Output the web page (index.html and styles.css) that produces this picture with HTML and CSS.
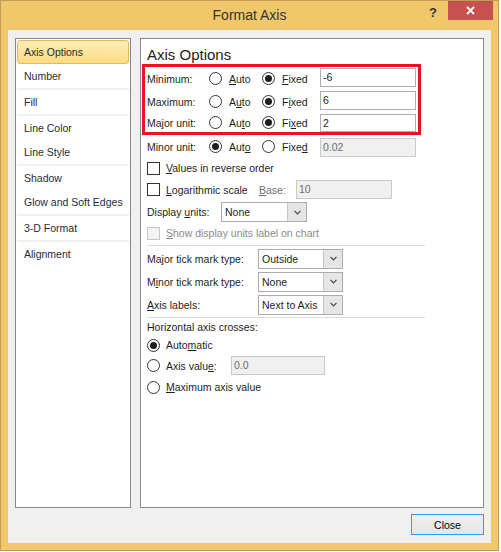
FILE: index.html
```html
<!DOCTYPE html>
<html lang="en">
<head>
    <meta charset="UTF-8">
    <title>Format Axis</title>
    <link rel="stylesheet" href="styles.css">
</head>
<body>
    <div class="window">
        <div class="titlebar">
            <span></span>
            <span class="title">Format Axis</span>
            <span class="controls">
                <span class="help">?</span>
                <span class="close-x">
                    <svg width="9" height="9" viewBox="0 0 9 9"><path d="M1 1L8 8M8 1L1 8" stroke="#fff" stroke-width="1.8"/></svg>
                </span>
            </span>
        </div>

        <div class="client">
            <ul class="nav">
                <li class="active">Axis Options</li>
                <li class="group-end">Number</li>
                <li class="group-end">Fill</li>
                <li>Line Color</li>
                <li class="group-end">Line Style</li>
                <li>Shadow</li>
                <li class="group-end">Glow and Soft Edges</li>
                <li class="group-end">3-D Format</li>
                <li>Alignment</li>
            </ul>

            <div class="panel">
                <h2>Axis Options</h2>

                <!-- highlighted block -->
                <div class="highlight">
                    <div class="unit-row">
                        <span>Minimum:</span>
                        <span class="option"><span class="radio"></span><span><u>A</u>uto</span></span>
                        <span class="option"><span class="radio on"></span><span><u>F</u>ixed</span></span>
                        <span class="textbox">-6</span>
                    </div>
                    <div class="unit-row">
                        <span>Maximum:</span>
                        <span class="option"><span class="radio"></span><span>A<u>u</u>to</span></span>
                        <span class="option"><span class="radio on"></span><span>F<u>i</u>xed</span></span>
                        <span class="textbox">6</span>
                    </div>
                    <div class="unit-row">
                        <span>Major unit:</span>
                        <span class="option"><span class="radio"></span><span>Au<u>t</u>o</span></span>
                        <span class="option"><span class="radio on"></span><span>Fi<u>x</u>ed</span></span>
                        <span class="textbox">2</span>
                    </div>
                </div>

                <div class="unit-row minor">
                    <span>Minor unit:</span>
                    <span class="option"><span class="radio on"></span><span>Aut<u>o</u></span></span>
                    <span class="option"><span class="radio"></span><span>Fixe<u>d</u></span></span>
                    <span class="textbox disabled">0.02</span>
                </div>

                <div class="check-row row-20">
                    <span class="checkbox"></span>
                    <span><u>V</u>alues in reverse order</span>
                </div>
                <div class="check-row row-23">
                    <span class="checkbox"></span>
                    <span class="log-label"><u>L</u>ogarithmic scale</span>
                    <span class="base-label"><u>B</u>ase:</span>
                    <span class="textbox disabled base-box">10</span>
                </div>
                <div class="check-row row-22">
                    <span class="units-label">Display <u>u</u>nits:</span>
                    <span class="select units-select">
                        <span class="sel-text">None</span>
                        <span class="sel-btn"><svg width="7" height="5" viewBox="0 0 7 5"><path d="M0.5 0.8L3.5 3.8L6.5 0.8" fill="none" stroke="#444" stroke-width="1.2"/></svg></span>
                    </span>
                </div>
                <div class="check-row row-20 muted">
                    <span class="checkbox off"></span>
                    <span><u>S</u>how display units label on chart</span>
                </div>

                <div class="rule first"></div>

                <div class="check-row row-23">
                    <span class="tick-label">Ma<u>j</u>or tick mark type:</span>
                    <span class="select tick-select">
                        <span class="sel-text">Outside</span>
                        <span class="sel-btn"><svg width="7" height="5" viewBox="0 0 7 5"><path d="M0.5 0.8L3.5 3.8L6.5 0.8" fill="none" stroke="#444" stroke-width="1.2"/></svg></span>
                    </span>
                </div>
                <div class="check-row row-23">
                    <span class="tick-label">M<u>i</u>nor tick mark type:</span>
                    <span class="select tick-select">
                        <span class="sel-text">None</span>
                        <span class="sel-btn"><svg width="7" height="5" viewBox="0 0 7 5"><path d="M0.5 0.8L3.5 3.8L6.5 0.8" fill="none" stroke="#444" stroke-width="1.2"/></svg></span>
                    </span>
                </div>
                <div class="check-row row-23">
                    <span class="tick-label"><u>A</u>xis labels:</span>
                    <span class="select tick-select">
                        <span class="sel-text">Next to Axis</span>
                        <span class="sel-btn"><svg width="7" height="5" viewBox="0 0 7 5"><path d="M0.5 0.8L3.5 3.8L6.5 0.8" fill="none" stroke="#444" stroke-width="1.2"/></svg></span>
                    </span>
                </div>

                <div class="rule"></div>

                <div class="caption">Horizontal axis crosses:</div>
                <div class="check-row row-18">
                    <span class="radio on"></span>
                    <span>Auto<u>m</u>atic</span>
                </div>
                <div class="check-row row-23">
                    <span class="radio"></span>
                    <span class="axis-label">Axis valu<u>e</u>:</span>
                    <span class="textbox disabled axis-box">0.0</span>
                </div>
                <div class="check-row row-20">
                    <span class="radio"></span>
                    <span><u>M</u>aximum axis value</span>
                </div>
            </div>

            <div class="footer">
                <button class="btn">Close</button>
            </div>
        </div>
    </div>
</body>
</html>
```

FILE: styles.css
```css
body {
    margin: 0;
    background-color: #fff;
    font-family: 'Liberation Sans', Arial, sans-serif;
    font-size: 10.5px;
    color: #1e1e1e;
}
.window {
    box-sizing: border-box;
    width: 499px;
    height: 551px;
    border: 1px solid #bf9d58;
    background-color: #f0c86b;
    padding: 0 7px 7px;
    display: flex;
    flex-direction: column;
}
.titlebar {
    margin: 0 -7px;
    height: 29px;
    display: grid;
    grid-template-columns: 1fr auto 1fr;
}
.title {
    font-size: 14px;
    line-height: 29px;
    color: #333;
}
.controls {
    justify-self: end;
    display: flex;
    align-items: flex-start;
}
.help {
    font-size: 13px;
    font-weight: bold;
    color: #333;
    margin: 5px 11px 0 0;
    line-height: 13px;
}
.close-x {
    width: 45px;
    height: 19px;
    margin-right: 5px;
    background-color: #c75050;
    display: flex;
    align-items: center;
    justify-content: center;
}
.client {
    flex: 1;
    background-color: #f0f0f0;
    padding: 8px 6px 0 7px;
    display: grid;
    grid-template-columns: 116px 344px;
    grid-template-rows: 470px 21px;
    column-gap: 9px;
    row-gap: 6px;
}
.nav {
    list-style: none;
    margin: 0;
    padding: 1px;
    border: 1px solid #828790;
    background-color: #fff;
    color: #1f2b3a;
}
.nav li {
    box-sizing: border-box;
    height: 24px;
    line-height: 24px;
    padding-left: 7px;
}
.nav li.group-end {
    height: 26px;
    border-bottom: 2px solid #f0f0f0;
}
.nav li.active {
    line-height: 22px;
    padding-left: 6px;
    border: 1px solid #e2b95a;
    border-radius: 3px;
    background: linear-gradient(#fdeeb4, #fcdb83);
}
.panel {
    border: 1px solid #828790;
    background-color: #fff;
    padding: 6px 0 0 6px;
}
.panel h2 {
    margin: 0;
    font-size: 15px;
    font-weight: normal;
    line-height: 19px;
    color: #1e1e1e;
}
.highlight {
    width: fit-content;
    margin-left: -5px;
    padding: 0 2px;
    border: 3px solid #e8141f;
}
.unit-row {
    display: grid;
    grid-template-columns: 62px 53px 58px 96px;
    align-items: center;
    height: 23px;
}
.highlight .unit-row:last-child {
    height: 19px;
}
.highlight .unit-row:last-child .textbox {
    height: 18px;
}
.unit-row .textbox {
    align-self: start;
    margin-top: 1px;
}
.unit-row.minor .textbox {
    margin-top: 3px;
}
.option {
    display: flex;
    align-items: center;
    gap: 7px;
}
.radio {
    box-sizing: border-box;
    width: 13px;
    height: 13px;
    border: 1px solid #333;
    border-radius: 50%;
    background-color: #fff;
    display: inline-grid;
    place-items: center;
    flex: none;
}
.radio.on::after {
    content: '';
    width: 7px;
    height: 7px;
    border-radius: 50%;
    background-color: #1e1e1e;
}
.checkbox {
    box-sizing: border-box;
    width: 13px;
    height: 13px;
    border: 1px solid #333;
    background-color: #fff;
    flex: none;
}
.checkbox.off {
    border-color: #c6c6c6;
    background-color: #f3f3f3;
}
.textbox {
    box-sizing: border-box;
    display: block;
    height: 19px;
    border: 1px solid #abadb3;
    background-color: #fff;
    padding: 0 2px;
    line-height: 17px;
}
.textbox.disabled {
    background-color: #f0f0f0;
    border-color: #c9c9c9;
    color: #6d6d6d;
}
.check-row {
    display: flex;
    align-items: center;
    gap: 6px;
}
.row-18 { height: 18px; }
.row-20 { height: 20px; }
.row-22 { height: 22px; }
.row-23 { height: 23px; }
.muted {
    color: #8a8a8a;
}
.log-label { width: 87px; }
.base-label {
    width: 31px;
    color: #6d6d6d;
}
.base-box { width: 96px; }
.units-label { width: 68px; }
.tick-label { width: 105px; }
.axis-label { width: 59px; }
.axis-box { width: 94px; }
.select {
    box-sizing: border-box;
    height: 20px;
    border: 1px solid #acacac;
    background-color: #fff;
    display: flex;
}
.units-select { width: 86px; }
.tick-select { width: 85px; }
.sel-text {
    flex: 1;
    padding-left: 3px;
    line-height: 18px;
    white-space: nowrap;
    overflow: hidden;
}
.sel-btn {
    width: 18px;
    background-color: #e6e6e6;
    border-left: 1px solid #c8c8c8;
    display: flex;
    align-items: center;
    justify-content: center;
}
.rule {
    width: 278px;
    height: 1px;
    background-color: #dcdcdc;
    margin: 1px 0;
}
.rule.first {
    margin-top: 2px;
}
.caption {
    height: 17px;
    line-height: 17px;
}
.footer {
    grid-column: 1 / -1;
    justify-self: end;
}
.btn {
    box-sizing: border-box;
    width: 73px;
    height: 21px;
    border: 1px solid #3399ff;
    background: linear-gradient(#f0f0f0, #e5e5e5);
    font-family: 'Liberation Sans', Arial, sans-serif;
    font-size: 10.5px;
    color: #000;
    padding: 0;
}
```
